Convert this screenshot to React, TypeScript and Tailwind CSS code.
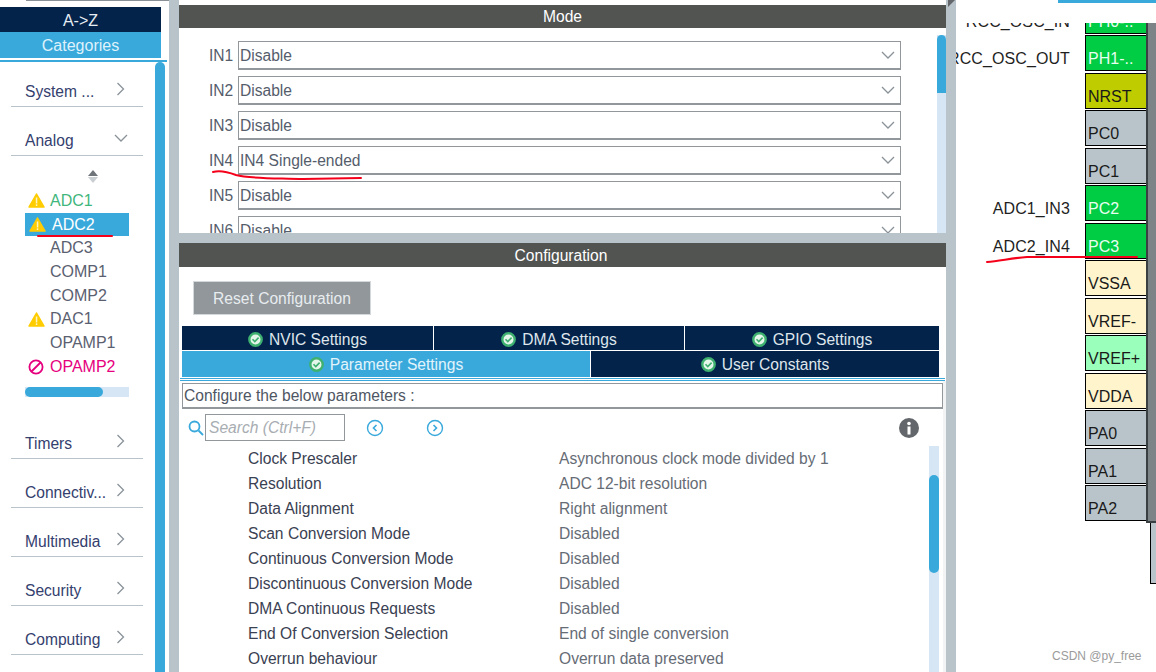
const sections1 = ['System ...', 'Analog'];
const sections2 = ['Timers', 'Connectiv...', 'Multimedia', 'Security', 'Computing'];

const analogItems = [
  { name: 'ADC1', icon: 'warn', color: 'text-[#3fb67c]' },
  { name: 'ADC2', icon: 'warn', color: 'text-white', active: true },
  { name: 'ADC3', color: 'text-[#5a6070]' },
  { name: 'COMP1', color: 'text-[#5a6070]' },
  { name: 'COMP2', color: 'text-[#5a6070]' },
  { name: 'DAC1', icon: 'warn', color: 'text-[#5a6070]' },
  { name: 'OPAMP1', color: 'text-[#5a6070]' },
  { name: 'OPAMP2', icon: 'ban', color: 'text-[#e6007e]' },
];

const modeRows = [
  { label: 'IN1', value: 'Disable' },
  { label: 'IN2', value: 'Disable' },
  { label: 'IN3', value: 'Disable' },
  { label: 'IN4', value: 'IN4 Single-ended' },
  { label: 'IN5', value: 'Disable' },
  { label: 'IN6', value: 'Disable' },
];

const params = [
  ['Clock Prescaler', 'Asynchronous clock mode divided by 1'],
  ['Resolution', 'ADC 12-bit resolution'],
  ['Data Alignment', 'Right alignment'],
  ['Scan Conversion Mode', 'Disabled'],
  ['Continuous Conversion Mode', 'Disabled'],
  ['Discontinuous Conversion Mode', 'Disabled'],
  ['DMA Continuous Requests', 'Disabled'],
  ['End Of Conversion Selection', 'End of single conversion'],
  ['Overrun behaviour', 'Overrun data preserved'],
];

const pins = [
  { name: 'PH0-..', label: 'RCC_OSC_IN', style: 'bg-[#00cc44] text-[#e8fff0]' },
  { name: 'PH1-..', label: 'RCC_OSC_OUT', style: 'bg-[#00cc44] text-[#e8fff0]' },
  { name: 'NRST', label: '', style: 'bg-[#bfcc00] text-[#1a1a1a]' },
  { name: 'PC0', label: '', style: 'bg-[#b9c4ca] text-[#1a1a1a]' },
  { name: 'PC1', label: '', style: 'bg-[#b9c4ca] text-[#1a1a1a]' },
  { name: 'PC2', label: 'ADC1_IN3', style: 'bg-[#00cc44] text-[#e8fff0]' },
  { name: 'PC3', label: 'ADC2_IN4', style: 'bg-[#00cc44] text-[#e8fff0]' },
  { name: 'VSSA', label: '', style: 'bg-[#fff4cc] text-[#1a1a1a]' },
  { name: 'VREF-', label: '', style: 'bg-[#fff4cc] text-[#1a1a1a]' },
  { name: 'VREF+', label: '', style: 'bg-[#99ffbb] text-[#1a1a1a]' },
  { name: 'VDDA', label: '', style: 'bg-[#fff4cc] text-[#1a1a1a]' },
  { name: 'PA0', label: '', style: 'bg-[#b9c4ca] text-[#1a1a1a]' },
  { name: 'PA1', label: '', style: 'bg-[#b9c4ca] text-[#1a1a1a]' },
  { name: 'PA2', label: '', style: 'bg-[#b9c4ca] text-[#1a1a1a]' },
];

const ChevronRight = () => (
  <svg width="9" height="14" viewBox="0 0 9 14" fill="none" stroke="#8a9299" strokeWidth="1.3">
    <path d="M1.5 1 L7.5 7 L1.5 13" />
  </svg>
);

const ChevronDown = ({ width = 14 }: { width?: number }) => (
  <svg width={width} height="8" viewBox="0 0 14 8" fill="none" stroke="#8a9299" strokeWidth="1.3">
    <path d="M1 1 L7 7 L13 1" />
  </svg>
);

const WarnIcon = () => (
  <svg width="17" height="15" viewBox="0 0 17 15">
    <path d="M8.5 1 L16 14 L1 14 Z" fill="#ffcc00" stroke="#ffcc00" strokeWidth="1.5" strokeLinejoin="round" />
    <rect x="7.8" y="4.5" width="1.5" height="6" fill="#fff4c0" />
    <rect x="7.8" y="11.3" width="1.5" height="1.7" fill="#fff4c0" />
  </svg>
);

const BanIcon = () => (
  <svg width="16" height="16" viewBox="0 0 16 16" fill="none" stroke="#e6007e" strokeWidth="1.8">
    <circle cx="8" cy="8" r="6.6" />
    <path d="M12.5 3.5 L3.5 12.5" />
  </svg>
);

const CheckIcon = () => (
  <svg width="15" height="15" viewBox="0 0 15 15" fill="none">
    <circle cx="7.5" cy="7.5" r="6.2" fill="#e4f5ea" stroke="#3eb06f" strokeWidth="2.4" />
    <path d="M4.5 7.2 L6.8 9.6 L10.6 5.6" stroke="#3eb06f" strokeWidth="1.6" />
  </svg>
);

const SectionRow = ({ name, open }: { name: string; open?: boolean }) => (
  <div className="h-[49px] border-b border-[#b9c4ca] flex items-end justify-between pb-[5px] text-[#34406e] text-[15.6px]">
    <span className="ml-[14px] whitespace-nowrap">{name}</span>
    <span className={open ? 'mr-[15px] mb-[8px]' : 'mr-[18px] mb-[5px]'}>
      {open ? <ChevronDown /> : <ChevronRight />}
    </span>
  </div>
);

const Sidebar = () => (
  <div className="w-[169px] shrink-0 h-full pt-[7px] relative overflow-hidden">
    <div className="w-[161px] h-[25px] bg-[#03234b] text-[#e6edf3] text-center leading-[27px] text-[16px]">A-&gt;Z</div>
    <div className="w-[161px] h-[26px] bg-[#39a9dc] text-[#dff2fb] text-center leading-[28px] text-[16px]">Categories</div>
    <div className="w-[167px] h-[2px] mt-[2px] bg-[#39a9dc]"></div>
    <div className="flex">
      <div className="w-[155px] shrink-0 pl-[11px] pr-[12px] -mt-[4px]">
        {sections1.map((s) => (
          <SectionRow key={s} name={s} open={s === 'Analog'} />
        ))}
        <div className="h-[254px] text-[16px]">
          <div className="h-[33px] pt-[14px] flex flex-col items-center pl-[32px] gap-[1px]">
            <div className="w-0 h-0 border-x-[5px] border-x-transparent border-b-[6px] border-b-[#6e7479]"></div>
            <div className="w-0 h-0 border-x-[5px] border-x-transparent border-t-[6px] border-t-[#c9ced2]"></div>
          </div>
          <div className="ml-[14px] w-[104px]">
            {analogItems.map((item) => (
              <div
                key={item.name}
                className={`h-[23.7px] flex items-center ${item.active ? 'bg-[#39a9dc]' : ''} ${item.color}`}
              >
                <span className={`w-[25px] shrink-0 ${item.active ? 'pl-[4px]' : 'pl-[3px]'} flex`}>
                  {item.icon === 'warn' && <WarnIcon />}
                  {item.icon === 'ban' && <BanIcon />}
                </span>
                <span className={item.active ? 'ml-[2px]' : ''}>{item.name}</span>
              </div>
            ))}
            <div className="h-[10px] mt-[8px] bg-[#d6e6f4]">
              <div className="w-[78px] h-full rounded-full bg-[#39a9dc]"></div>
            </div>
          </div>
        </div>
        {sections2.map((s) => (
          <SectionRow key={s} name={s} />
        ))}
      </div>
      <div className="w-[10px] h-[620px] rounded-t-full bg-[#39a9dc]"></div>
    </div>
    <div className="absolute top-0 left-[26px] right-0 h-px bg-[#8a9196]"></div>
  </div>
);

const ModePanel = () => (
  <div className="h-[233px] pt-[5px] flex flex-col overflow-hidden">
    <div className="h-[23px] shrink-0 bg-[#525452] text-white text-center leading-[23px]">Mode</div>
    <div className="flex-1 flex min-h-0">
      <div className="flex-1 pt-[13px] pl-[30px] flex flex-col gap-[6px] overflow-hidden">
        {modeRows.map((row) => (
          <div key={row.label} className="flex items-center h-[29px] shrink-0">
            <span className="w-[29px] text-[#555d6b] mt-[1px]">{row.label}</span>
            <div className="w-[663px] h-[29px] border border-[#91979b] border-b-2 pl-[1px] flex items-center justify-between pr-[5px] text-[#555d6b]">
              <span className="mt-[2px]">{row.value}</span>
              <ChevronDown />
            </div>
          </div>
        ))}
      </div>
      <div className="w-[9px] bg-[#d6e6f4] mt-[7px]">
        <div className="h-[58px] bg-[#39a9dc] rounded-t-full rounded-b-md"></div>
      </div>
    </div>
  </div>
);

const Tab = ({ label, active, className }: { label: string; active?: boolean; className: string }) => (
  <div
    className={`flex items-center justify-center gap-[6px] ${active ? 'bg-[#39a9dc] text-[#e2f4fb]' : 'bg-[#03234b] text-[#dfe6ec]'} ${className}`}
  >
    <CheckIcon />
    <span>{label}</span>
  </div>
);

const ConfigPanel = () => (
  <div className="flex-1 min-h-0 flex flex-col overflow-hidden">
    <div className="h-[24px] shrink-0 bg-[#525452] text-white text-center leading-[26px] pr-[3px]">Configuration</div>
    <div className="mt-[14px] ml-[14px] w-[178px] h-[34px] shrink-0 bg-[#91979b] border border-[#d3d8db] text-[#e8ecef] text-center leading-[34px]">
      Reset Configuration
    </div>
    <div className="mt-[11px] ml-[3px] w-[757px] shrink-0 flex flex-col gap-px">
      <div className="flex h-[24px] gap-px">
        <Tab label="NVIC Settings" className="w-[251px] pt-[3px]" />
        <Tab label="DMA Settings" className="w-[250px] pt-[3px]" />
        <Tab label="GPIO Settings" className="flex-1 pt-[3px]" />
      </div>
      <div className="flex h-[26px] gap-px">
        <Tab label="Parameter Settings" active className="w-[408px] pt-[1px]" />
        <Tab label="User Constants" className="flex-1 pt-[1px]" />
      </div>
    </div>
    <div className="mt-[1px] h-[1px] w-[765px] ml-[1px] shrink-0 bg-[#39a9dc]"></div>
    <div className="mt-[1px] h-[1px] w-[765px] ml-[1px] shrink-0 bg-[#39a9dc]"></div>
    <div className="flex-1 min-h-0 flex flex-col border-r-[3px] border-[#f1f3f5]">
      <div className="mt-[2px] ml-[3px] w-[761px] h-[26px] shrink-0 border border-[#91979b] border-b-2 text-[#4f5663] pl-[1px] leading-[24px]">
        Configure the below parameters :
      </div>
      <div className="flex items-center h-[27px] mt-[5px] shrink-0">
        <svg className="ml-[9px]" width="16" height="16" viewBox="0 0 16 16" fill="none" stroke="#39a9dc" strokeWidth="1.8">
          <circle cx="6.5" cy="6.5" r="5" />
          <path d="M10.5 10.5 L15 15" />
        </svg>
        <div className="ml-px w-[140px] h-[27px] border border-[#91979b] pl-[3px] text-[#a8adb2] italic leading-[26px]">
          Search (Ctrl+F)
        </div>
        <svg className="ml-[21px]" width="18" height="18" viewBox="0 0 18 18" fill="none" stroke="#39a9dc">
          <circle cx="9" cy="9" r="7.5" strokeWidth="1.4" />
          <path d="M10.5 6 L7.5 9 L10.5 12" strokeWidth="1.6" />
        </svg>
        <svg className="ml-[42px]" width="18" height="18" viewBox="0 0 18 18" fill="none" stroke="#39a9dc">
          <circle cx="9" cy="9" r="7.5" strokeWidth="1.4" />
          <path d="M7.5 6 L10.5 9 L7.5 12" strokeWidth="1.6" />
        </svg>
        <svg className="ml-[455px]" width="20" height="20" viewBox="0 0 20 20">
          <circle cx="10" cy="10" r="10" fill="#63676b" />
          <rect x="8.5" y="8.5" width="3" height="8" fill="#fff" />
          <circle cx="10" cy="5.5" r="1.8" fill="#fff" />
        </svg>
      </div>
      <div className="flex-1 min-h-0 flex mt-[5px]">
        <div className="w-[750px] shrink-0 pl-[69px] text-[15.6px]">
          {params.map(([name, value]) => (
            <div key={name} className="h-[25px] flex items-center">
              <span className="w-[311px] shrink-0 text-[#3a4152] whitespace-nowrap">{name}</span>
              <span className="text-[#666c75] whitespace-nowrap">{value}</span>
            </div>
          ))}
        </div>
        <div className="w-[10px] bg-[#d6e6f4] pt-[29px]">
          <div className="h-[98px] bg-[#39a9dc] rounded-t-md rounded-b-md"></div>
        </div>
      </div>
    </div>
  </div>
);

const PinPanel = () => (
  <div className="flex-1 h-full relative overflow-hidden text-[16px]">
    <div className="h-[3px] ml-[102px] bg-[#39a9dc]"></div>
    <div className="mt-[20px] h-[649px] flex overflow-hidden">
      <div className="w-[190px] shrink-0 -mt-[25.5px] flex flex-col gap-[1.5px]">
        {pins.map((pin) => (
          <div key={pin.name} className="h-[36px] shrink-0 flex">
            <div className="w-[129px] shrink-0 pt-[15px] text-right pr-[15px] text-[#1f1f1f] tracking-[0.1px] whitespace-nowrap flex justify-end overflow-hidden">
              {pin.label}
            </div>
            <div className={`w-[62px] shrink-0 border border-black pl-[2px] pt-[14px] ${pin.style}`}>{pin.name}</div>
          </div>
        ))}
      </div>
      <div className="flex-1 flex flex-col">
        <div className="h-[500px] border-l-2 border-b-2 border-[#3a3f42] bg-[#7d8488]"></div>
        <div className="h-[61px] ml-[4px] border-l border-b border-black bg-[#b9c4ca]"></div>
      </div>
    </div>
  </div>
);

export default function App() {
  return (
    <div className="relative w-[1156px] h-[672px] overflow-hidden bg-white flex text-[15.6px] leading-[18px] font-['Liberation_Sans',Arial,sans-serif]">
      <Sidebar />
      <div className="w-[10px] shrink-0 bg-[#b9c4ca]"></div>
      <div className="w-[767px] shrink-0 h-full flex flex-col">
        <ModePanel />
        <div className="h-[10px] shrink-0 bg-[#b9c4ca]"></div>
        <ConfigPanel />
      </div>
      <div className="w-[10px] shrink-0 bg-[#b9c4ca] overflow-hidden">
        <svg width="10" height="8" viewBox="0 0 10 8">
          <path d="M2 0 H9 L2 7 Z" fill="#63676b" />
        </svg>
      </div>
      <PinPanel />

      {/* hand drawn red annotations */}
      <svg className="absolute inset-0 pointer-events-none" width="1156" height="672" fill="none" stroke="#f5001a" strokeWidth="2" strokeLinecap="round">
        <path d="M213 172 C220 170 228 172 236 175 C250 179 280 178 303 179 L361 178" />
        <path d="M38 236 L112 236" />
        <path d="M987 262 C1000 261 1012 258 1027 257 L1137 257" />
      </svg>
      <div className="absolute left-[1052px] top-[649px] text-[12px] leading-[14px] text-[#9b9b9b]">CSDN @py_free</div>
    </div>
  );
}
